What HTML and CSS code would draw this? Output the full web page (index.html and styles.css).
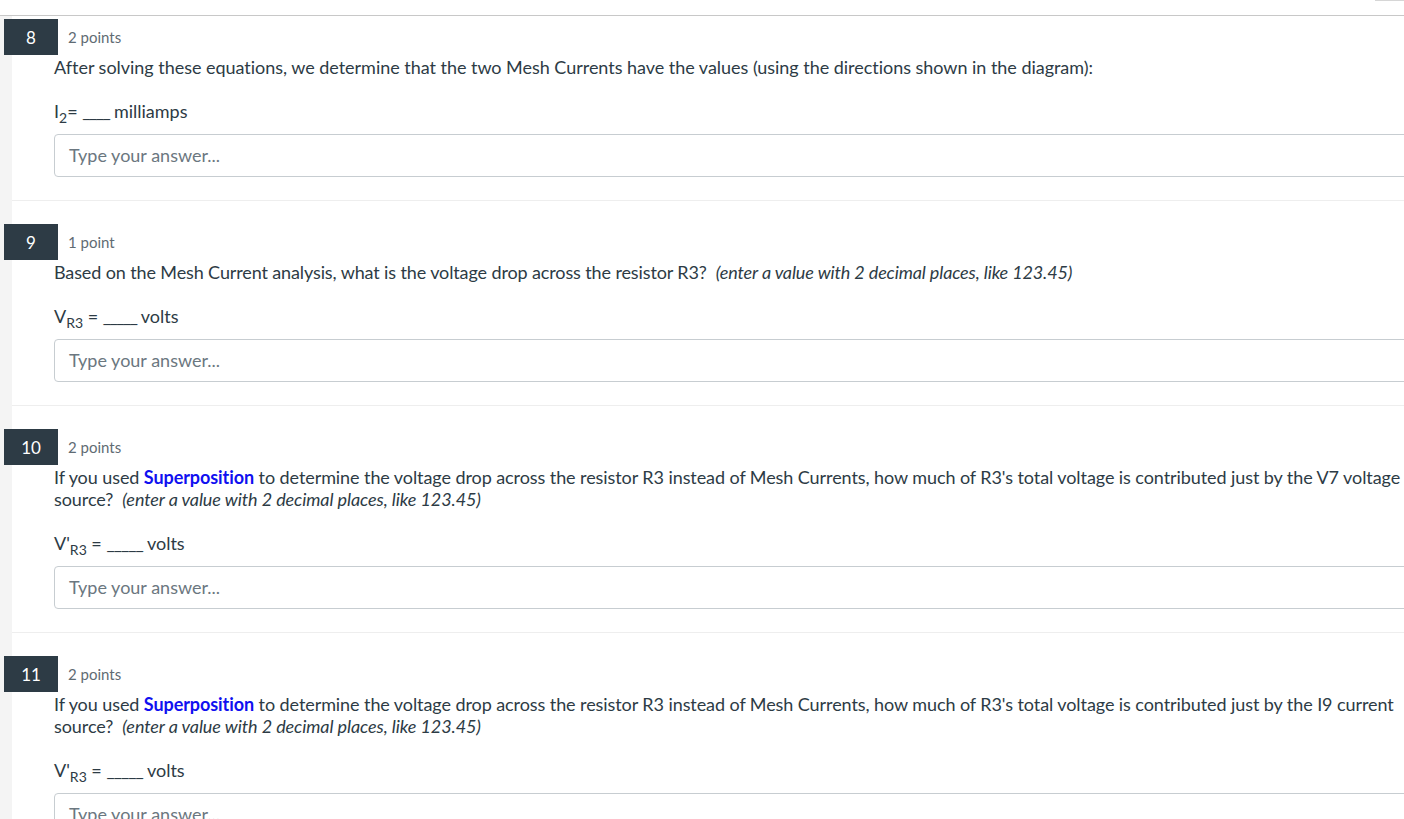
FILE: index.html
```html
<!DOCTYPE html>
<html>
<head>
<meta charset="utf-8">
<link rel="stylesheet" href="styles.css">
</head>
<body>
<div class="topbar"><span class="topbar-tab"></span></div>
<div class="page">
  <div class="card">
    <section class="question first">
      <div class="q-head"><span class="badge">8</span><span class="points">2 points</span></div>
      <p class="q-text q-text-a">After solving these equations, we determine that the two Mesh Currents have the values (using the directions shown in the diagram):</p>
      <p class="q-answer">I<sub>2</sub>= <span class="blank blank-short">____</span> milliamps</p>
      <div class="input">Type your answer...</div>
    </section>
    <section class="question">
      <div class="q-head"><span class="badge">9</span><span class="points">1 point</span></div>
      <p class="q-text q-text-b">Based on the Mesh Current analysis, what is the voltage drop across the resistor R3?&nbsp; <em>(enter a value with 2 decimal places, like 123.45)</em></p>
      <p class="q-answer">V<sub>R3</sub> = <span class="blank blank-short">_____</span> volts</p>
      <div class="input">Type your answer...</div>
    </section>
    <section class="question">
      <div class="q-head"><span class="badge">10</span><span class="points">2 points</span></div>
      <p class="q-text q-text-c">If you used <a class="link">Superposition</a> to determine the voltage drop across the resistor R3 instead of Mesh Currents, how much of R3's total voltage is contributed just by the V7 voltage source?&nbsp; <em>(enter a value with 2 decimal places, like 123.45)</em></p>
      <p class="q-answer">V'<sub>R3</sub> = <span class="blank">_____</span> volts</p>
      <div class="input">Type your answer...</div>
    </section>
    <section class="question">
      <div class="q-head"><span class="badge">11</span><span class="points">2 points</span></div>
      <p class="q-text q-text-c">If you used <a class="link">Superposition</a> to determine the voltage drop across the resistor R3 instead of Mesh Currents, how much of R3's total voltage is contributed just by the I9 current source?&nbsp; <em>(enter a value with 2 decimal places, like 123.45)</em></p>
      <p class="q-answer">V'<sub>R3</sub> = <span class="blank">_____</span> volts</p>
      <div class="input">Type your answer...</div>
    </section>
  </div>
</div>
</body>
</html>
```
FILE: styles.css
```css
html, body {
  margin: 0;
  padding: 0;
  background: #ffffff;
  overflow: hidden;
  width: 1404px;
  height: 819px;
}
body {
  font-family: Lato, "Liberation Sans", sans-serif;
  color: #2d3b45;
}
.topbar {
  height: 15px;
  border-bottom: 1px solid #c8c8c8;
  display: flex;
  justify-content: flex-end;
  align-items: flex-start;
}
.topbar-tab {
  width: 29px;
  height: 0;
  border-top: 1px solid #d6d6d6;
}
.page {
  background: #f4f4f4;
  padding-left: 12px;
  min-height: 900px;
}
.card {
  background: #ffffff;
  width: 1440px;
  min-height: 900px;
}
.question {
  padding: 23px 0 23px 42px;
  border-bottom: 1px solid #eeeeee;
}
.question.first {
  padding-top: 3px;
}
.q-head {
  display: flex;
  align-items: center;
  height: 36px;
}
.badge {
  margin-left: -50px;
  width: 54px;
  height: 36px;
  background: #2d3b45;
  color: #ffffff;
  font-size: 17px;
  display: flex;
  align-items: center;
  justify-content: center;
}
.points {
  margin-left: 10px;
  font-size: 15px;
  color: #5f6b73;
}
.q-text {
  margin: 1px 0 0 0;
  font-size: 18px;
  line-height: 22px;
  width: 1350px;
}
.q-text-a {
  letter-spacing: -0.03px;
}
.q-text-b {
  letter-spacing: -0.12px;
}
.q-text-c {
  letter-spacing: -0.08px;
}
.q-text em {
  font-style: italic;
}
.link {
  color: #1010f0;
  font-weight: bold;
}
.q-answer {
  margin: 21px 0 0 0;
  font-size: 18px;
  line-height: 24px;
}
.q-answer sub {
  font-size: 14px;
  line-height: 0;
  vertical-align: -5px;
}
.blank {
  letter-spacing: -1px;
}
.blank-short {
  letter-spacing: -1.5px;
}
.input {
  margin-top: 11px;
  height: 41px;
  border: 1px solid #c7cdd1;
  border-radius: 4px;
  padding-left: 14px;
  font-size: 18px;
  line-height: 41px;
  color: #6b7780;
  width: 1400px;
}
```
